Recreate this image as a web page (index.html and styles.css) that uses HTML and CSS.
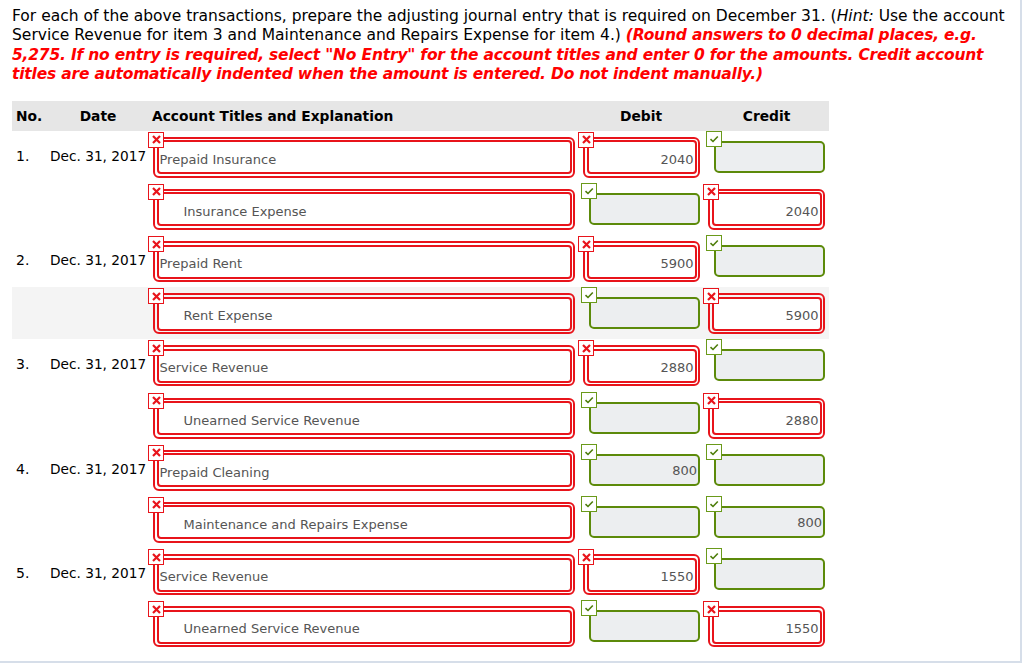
FILE: index.html
```html
<!DOCTYPE html>
<html>
<head>
<meta charset="utf-8">
<link rel="stylesheet" href="styles.css">
</head>
<body>
<div class="page">
  <p class="intro">For each of the above transactions, prepare the adjusting journal entry that is required on December 31. (<i>Hint:</i> Use the account Service Revenue for item 3 and Maintenance and Repairs Expense for item 4.) <b class="warn">(Round answers to 0 decimal places, e.g. 5,275. If no entry is required, select "No Entry" for the account titles and enter 0 for the amounts. Credit account titles are automatically indented when the amount is entered. Do not indent manually.)</b></p>

  <div class="journal">
    <div class="row head">
      <div class="c-no">No.</div>
      <div class="c-date">Date</div>
      <div class="c-acc">Account Titles and Explanation</div>
      <div class="c-dr">Debit</div>
      <div class="c-cr">Credit</div>
    </div>

    <div class="row">
      <div class="c-no">1.</div>
      <div class="c-date">Dec. 31, 2017</div>
      <div class="c-acc"><div class="fld bad acc"><span class="ic x"></span><div class="in">Prepaid Insurance</div></div></div>
      <div class="c-dr"><div class="fld bad amt"><span class="ic x"></span><div class="in num">2040</div></div></div>
      <div class="c-cr"><div class="fld ok amt"><span class="ic v"></span><div class="in num"></div></div></div>
    </div>
    <div class="row">
      <div class="c-no"></div>
      <div class="c-date"></div>
      <div class="c-acc"><div class="fld bad acc"><span class="ic x"></span><div class="in indent">Insurance Expense</div></div></div>
      <div class="c-dr"><div class="fld ok amt"><span class="ic v"></span><div class="in num"></div></div></div>
      <div class="c-cr"><div class="fld bad amt"><span class="ic x"></span><div class="in num">2040</div></div></div>
    </div>

    <div class="row">
      <div class="c-no">2.</div>
      <div class="c-date">Dec. 31, 2017</div>
      <div class="c-acc"><div class="fld bad acc"><span class="ic x"></span><div class="in">Prepaid Rent</div></div></div>
      <div class="c-dr"><div class="fld bad amt"><span class="ic x"></span><div class="in num">5900</div></div></div>
      <div class="c-cr"><div class="fld ok amt"><span class="ic v"></span><div class="in num"></div></div></div>
    </div>
    <div class="row shade">
      <div class="c-no"></div>
      <div class="c-date"></div>
      <div class="c-acc"><div class="fld bad acc"><span class="ic x"></span><div class="in indent">Rent Expense</div></div></div>
      <div class="c-dr"><div class="fld ok amt"><span class="ic v"></span><div class="in num"></div></div></div>
      <div class="c-cr"><div class="fld bad amt"><span class="ic x"></span><div class="in num">5900</div></div></div>
    </div>

    <div class="row">
      <div class="c-no">3.</div>
      <div class="c-date">Dec. 31, 2017</div>
      <div class="c-acc"><div class="fld bad acc"><span class="ic x"></span><div class="in">Service Revenue</div></div></div>
      <div class="c-dr"><div class="fld bad amt"><span class="ic x"></span><div class="in num">2880</div></div></div>
      <div class="c-cr"><div class="fld ok amt"><span class="ic v"></span><div class="in num"></div></div></div>
    </div>
    <div class="row">
      <div class="c-no"></div>
      <div class="c-date"></div>
      <div class="c-acc"><div class="fld bad acc"><span class="ic x"></span><div class="in indent">Unearned Service Revenue</div></div></div>
      <div class="c-dr"><div class="fld ok amt"><span class="ic v"></span><div class="in num"></div></div></div>
      <div class="c-cr"><div class="fld bad amt"><span class="ic x"></span><div class="in num">2880</div></div></div>
    </div>

    <div class="row">
      <div class="c-no">4.</div>
      <div class="c-date">Dec. 31, 2017</div>
      <div class="c-acc"><div class="fld bad acc"><span class="ic x"></span><div class="in">Prepaid Cleaning</div></div></div>
      <div class="c-dr"><div class="fld ok amt"><span class="ic v"></span><div class="in num filled">800</div></div></div>
      <div class="c-cr"><div class="fld ok amt"><span class="ic v"></span><div class="in num"></div></div></div>
    </div>
    <div class="row">
      <div class="c-no"></div>
      <div class="c-date"></div>
      <div class="c-acc"><div class="fld bad acc"><span class="ic x"></span><div class="in indent">Maintenance and Repairs Expense</div></div></div>
      <div class="c-dr"><div class="fld ok amt"><span class="ic v"></span><div class="in num"></div></div></div>
      <div class="c-cr"><div class="fld ok amt"><span class="ic v"></span><div class="in num filled">800</div></div></div>
    </div>

    <div class="row">
      <div class="c-no">5.</div>
      <div class="c-date">Dec. 31, 2017</div>
      <div class="c-acc"><div class="fld bad acc"><span class="ic x"></span><div class="in">Service Revenue</div></div></div>
      <div class="c-dr"><div class="fld bad amt"><span class="ic x"></span><div class="in num">1550</div></div></div>
      <div class="c-cr"><div class="fld ok amt"><span class="ic v"></span><div class="in num"></div></div></div>
    </div>
    <div class="row">
      <div class="c-no"></div>
      <div class="c-date"></div>
      <div class="c-acc"><div class="fld bad acc"><span class="ic x"></span><div class="in indent">Unearned Service Revenue</div></div></div>
      <div class="c-dr"><div class="fld ok amt"><span class="ic v"></span><div class="in num"></div></div></div>
      <div class="c-cr"><div class="fld bad amt"><span class="ic x"></span><div class="in num">1550</div></div></div>
    </div>
  </div>
</div>
</body>
</html>
```
FILE: styles.css
```css
html, body {
  margin: 0;
  padding: 0;
  background: #fff;
}
body {
  font-family: "DejaVu Sans", Verdana, sans-serif;
  color: #000;
}
.page {
  box-sizing: border-box;
  width: 1022px;
  height: 663px;
  border-right: 2px solid #d6dee9;
  border-bottom: 2px solid #d6dee9;
  overflow: hidden;
}
.intro {
  margin: 0;
  padding: 7px 0 0 12px;
  width: 1000px;
  font-size: 15.5px;
  line-height: 19.4px;
}
.intro i { font-style: italic; }
.warn {
  color: #f00;
  font-style: italic;
  font-weight: bold;
  letter-spacing: -0.2px;
}
.journal {
  margin: 16px 0 0 12px;
  width: 817px;
}
.row {
  display: grid;
  grid-template-columns: 38px 96px 432px 126px 125px;
  height: 52.2px;
  font-size: 14px;
}
.row.head {
  height: 30px;
  background: #e6e6e6;
  font-weight: bold;
  font-size: 13.8px;
  align-items: center;
}
.row.shade { background: #f4f4f4; }
.head .c-no { padding-left: 4px; }
.head .c-date { text-align: center; }
.head .c-acc { padding-left: 6px; }
.head .c-dr, .head .c-cr { text-align: center; }

.row .c-no { padding-left: 4px; }
.row:not(.head) .c-no, .row:not(.head) .c-date {
  padding-top: 17px;
  line-height: 17px;
  white-space: nowrap;
}
.row:not(.head) .c-date { font-size: 13.7px; }
.row:not(.head) .c-acc { padding: 6px 0 0 7px; }
.row:not(.head) .c-dr { padding: 6px 0 0 5px; }
.row:not(.head) .c-cr { padding: 6px 0 0 4px; }

.fld {
  position: relative;
  box-sizing: border-box;
  height: 41px;
}
.fld.acc { width: 422px; }
.fld.amt { width: 117px; }
.fld.bad {
  border: 2px solid #e8141b;
  border-radius: 6px;
  padding: 1.5px;
}
.fld.ok {
  padding: 4px 0 5px 6px;
}
.in {
  box-sizing: border-box;
  height: 100%;
  font-size: 13px;
  color: #555;
  display: flex;
  align-items: center;
  padding: 0 1px;
  white-space: nowrap;
}
.bad .in {
  border: 2px solid #e8141b;
  border-radius: 4px;
  background: #fff;
  padding-top: 4px;
}
.ok .in {
  border: 2px solid #5c8a0a;
  border-radius: 5px;
  background: #eceef0;
  padding-top: 2px;
}
.in.indent { padding-left: 25px; }
.in.num { justify-content: flex-end; padding-right: 1px; }

.ic {
  position: absolute;
  box-sizing: border-box;
  width: 16px;
  height: 16px;
  background-color: #fff;
  background-repeat: no-repeat;
  background-position: center;
  z-index: 2;
}
.bad .ic { left: -7px; top: -7px; }
.ok .ic { left: -2px; top: -6px; }
.ic.x {
  border: 1.5px solid #e8141b;
  background-image: url("data:image/svg+xml;utf8,<svg xmlns='http://www.w3.org/2000/svg' width='9' height='9' viewBox='0 0 9 9'><path d='M1 1L8 8M8 1L1 8' stroke='%23e8141b' stroke-width='2.2' fill='none'/></svg>");
}
.ic.v {
  border: 1.5px solid #6a9a1a;
  background-image: url("data:image/svg+xml;utf8,<svg xmlns='http://www.w3.org/2000/svg' width='10' height='8' viewBox='0 0 10 8'><path d='M1.5 4.2L4 6.5L8.8 1.5' stroke='%234d7d0a' stroke-width='1.6' fill='none'/></svg>");
}
```
